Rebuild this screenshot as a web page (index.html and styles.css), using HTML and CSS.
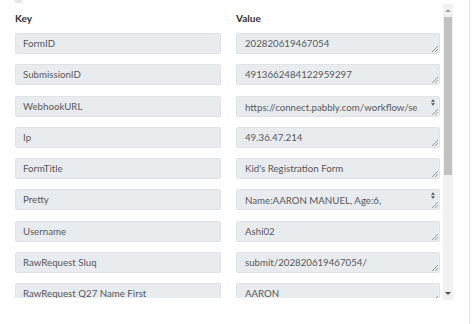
FILE: index.html
```html
<!DOCTYPE html>
<html>
<head>
<meta charset="utf-8">
<link rel="stylesheet" href="styles.css">
</head>
<body>
<div class="frame">
  <div class="topbit"></div>
  <div class="panel">
    <div class="content">
      <div class="grid">
        <div class="head">Key</div>
        <div class="head">Value</div>

        <div class="field key">FormID</div>
        <div class="field val grip">202820619467054</div>

        <div class="field key">SubmissionID</div>
        <div class="field val grip">4913662484122959297</div>

        <div class="field key">WebhookURL</div>
        <div class="field val grip wrap">https://connect.pabbly.com/workflow/se<br>ndwebhookdata/IjU3NjUwNTY4MDYzMDA0MzY1MjZm<span class="spin"><i class="up"></i><i class="down"></i></span></div>

        <div class="field key">Ip</div>
        <div class="field val grip">49.36.47.214</div>

        <div class="field key">FormTitle</div>
        <div class="field val grip">Kid's Registration Form</div>

        <div class="field key">Pretty</div>
        <div class="field val grip wrap">Name:AARON MANUEL, Age:6,<br>Gender:Male, Parent Name:Ashi, Email:<span class="spin"><i class="up"></i><i class="down"></i></span></div>

        <div class="field key">Username</div>
        <div class="field val grip">Ashi02</div>

        <div class="field key">RawRequest Sluq</div>
        <div class="field val grip">submit/202820619467054/</div>

        <div class="field key">RawRequest Q27 Name First</div>
        <div class="field val grip">AARON</div>
      </div>
    </div>
    <div class="vscroll">
      <div class="sb-btn top"><i class="tri-up"></i></div>
      <div class="thumb"></div>
      <div class="sb-space"></div>
      <div class="sb-btn bottom"><i class="tri-down"></i></div>
    </div>
  </div>
</div>
</body>
</html>
```

FILE: styles.css
```css
html, body {
  margin: 0;
  padding: 0;
  background: #ffffff;
}

body {
  font-family: "Lato", "Liberation Sans", sans-serif;
}

.frame {
  width: 469px;
  height: 324px;
  border-right: 1px solid #e6e8eb;
  overflow: hidden;
}

.topbit {
  width: 7px;
  height: 3px;
  margin-left: 15px;
  margin-bottom: 1px;
  background: #e4e6e9;
  border-radius: 0 0 1px 1px;
}

.panel {
  display: flex;
  width: 453px;
  height: 296px;
}

.content {
  width: 443px;
  height: 294px;
  overflow: hidden;
  box-sizing: border-box;
  padding: 8px 0 0 15px;
}

.grid {
  display: grid;
  grid-template-columns: 206px 204px;
  column-gap: 15px;
  row-gap: 10.25px;
}

.head {
  font-size: 10px;
  font-weight: 700;
  color: #2f2f2f;
  line-height: 12px;
  height: 12px;
  margin-bottom: -1.25px;
}

.field {
  position: relative;
  box-sizing: border-box;
  height: 21px;
  background: #e9ecef;
  border: 1px solid #dfe3e7;
  border-radius: 2px;
  font-size: 9.7px;
  color: #55585c;
  line-height: 19px;
  white-space: nowrap;
  overflow: hidden;
}

.key {
  padding: 0 7px;
}

.val {
  padding: 0 8px;
}

.wrap {
  line-height: 13px;
  padding-top: 4px;
}

.grip::after {
  content: "";
  position: absolute;
  right: 1px;
  bottom: 1px;
  width: 6px;
  height: 6px;
  background: linear-gradient(135deg,
    transparent 0 48%, #9a9a9a 48% 56%, transparent 56% 72%,
    #9a9a9a 72% 80%, transparent 80%);
}

.spin {
  position: absolute;
  right: 3px;
  top: 2px;
  width: 7px;
  height: 8px;
  display: flex;
  flex-direction: column;
  align-items: center;
  gap: 1px;
}

.spin .up {
  width: 0;
  height: 0;
  border-left: 2.5px solid transparent;
  border-right: 2.5px solid transparent;
  border-bottom: 3px solid #6a6a6a;
}

.spin .down {
  width: 0;
  height: 0;
  border-left: 2.5px solid transparent;
  border-right: 2.5px solid transparent;
  border-top: 3px solid #6a6a6a;
}

.vscroll {
  width: 10px;
  height: 296px;
  background: #f1f1f1;
  display: flex;
  flex-direction: column;
}

.sb-btn {
  display: flex;
  align-items: center;
  justify-content: center;
}

.sb-btn.top {
  height: 13px;
}

.sb-btn.bottom {
  height: 14px;
}

.tri-up {
  width: 0;
  height: 0;
  border-left: 3px solid transparent;
  border-right: 3px solid transparent;
  border-bottom: 3px solid #a8a8a8;
}

.tri-down {
  width: 0;
  height: 0;
  border-left: 3px solid transparent;
  border-right: 3px solid transparent;
  border-top: 3px solid #505050;
}

.thumb {
  height: 158px;
  margin: 0 1px;
  background: #c1c1c1;
}

.sb-space {
  flex: 1;
}
```
